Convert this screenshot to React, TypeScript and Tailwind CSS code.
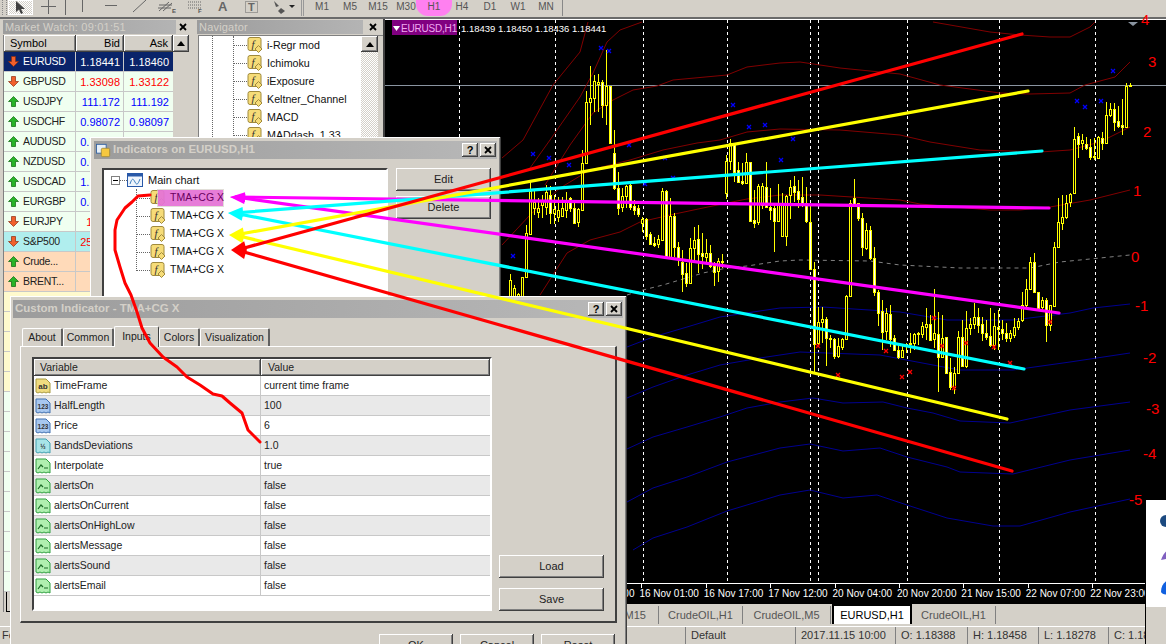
const raised = "shadow-[inset_-1px_-1px_#404040,inset_1px_1px_#fff,inset_-2px_-2px_#808080]";
const dither = "bg-[repeating-conic-gradient(#fff_0_25%,#d4d0c8_0_50%)] bg-[length:2px_2px]";

type Row = [string, string, string, "up" | "down", string, string];

const quotes: Row[] = [
  ["EURUSD", "1.18441", "1.18460", "down", "text-white", "bg-[#0a246a] text-white"],
  ["GBPUSD", "1.33098", "1.33122", "down", "text-[#ff0000]", "bg-[#f0fff0]"],
  ["USDJPY", "111.172", "111.192", "up", "text-[#0000ff]", "bg-[#f0fff0]"],
  ["USDCHF", "0.98072", "0.98097", "up", "text-[#0000ff]", "bg-[#f0fff0]"],
  ["AUDUSD", "0.76512", "", "up", "text-[#0000ff]", "bg-[#f0fff0]"],
  ["NZDUSD", "0.68470", "", "up", "text-[#0000ff]", "bg-[#f0fff0]"],
  ["USDCAD", "1.27310", "", "up", "text-[#0000ff]", "bg-[#f0fff0]"],
  ["EURGBP", "0.88982", "", "up", "text-[#0000ff]", "bg-[#f0fff0]"],
  ["EURJPY", "131.54", "", "down", "text-[#ff0000]", "bg-[#f0fff0]"],
  ["S&P500", "2568.40", "", "down", "text-[#ff0000]", "bg-[#b0eeee]"],
  ["Crude...", "", "", "up", "", "bg-[#ffdab9]"],
  ["BRENT...", "", "", "up", "", "bg-[#ffdab9]"],
];

const params: [string, string, "ab" | "123" | "half" | "bool"][] = [
  ["TimeFrame", "current time frame", "ab"],
  ["HalfLength", "100", "123"],
  ["Price", "6", "123"],
  ["BandsDeviations", "1.0", "half"],
  ["Interpolate", "true", "bool"],
  ["alertsOn", "false", "bool"],
  ["alertsOnCurrent", "false", "bool"],
  ["alertsOnHighLow", "false", "bool"],
  ["alertsMessage", "false", "bool"],
  ["alertsSound", "false", "bool"],
  ["alertsEmail", "false", "bool"],
];

// x, high, low, body top, body bottom, filled
const candles: [number, number, number, number, number, number][] = [
  [510, 274, 296, 280, 296, 0], [514, 285, 296, 288, 296, 0], [518, 293, 296, 294, 296, 0], [522, 277, 296, 277, 296, 0],
  [526, 225, 278, 233, 277, 0], [530, 182, 234, 191, 234, 0], [534, 190, 215, 202, 208, 0], [538, 198, 218, 208, 212, 0],
  [542, 195, 218, 200, 205, 0], [546, 185, 215, 192, 207, 0], [550, 186, 224, 195, 213, 1], [554, 195, 224, 209, 213, 0],
  [558, 197, 222, 210, 217, 0], [562, 197, 216, 208, 216, 0], [566, 192, 218, 200, 210, 0], [570, 197, 212, 198, 208, 1],
  [574, 200, 223, 208, 223, 1], [578, 208, 227, 209, 222, 0], [582, 150, 210, 163, 210, 0], [586, 91, 163, 102, 163, 0],
  [590, 66, 125, 98, 102, 0], [594, 75, 112, 81, 98, 0], [598, 74, 112, 82, 84, 0], [602, 80, 118, 82, 105, 1],
  [606, 50, 125, 86, 105, 0], [610, 86, 143, 86, 143, 1], [614, 130, 190, 153, 188, 1], [618, 172, 215, 188, 208, 1],
  [622, 188, 212, 196, 207, 0], [626, 185, 208, 186, 196, 0], [630, 184, 210, 185, 207, 1], [634, 200, 215, 206, 210, 1],
  [638, 205, 217, 208, 214, 1], [642, 217, 232, 219, 223, 0], [646, 218, 240, 219, 236, 1], [650, 232, 245, 234, 244, 1],
  [654, 237, 247, 243, 245, 1], [658, 235, 248, 239, 244, 0], [662, 188, 240, 191, 240, 0], [666, 190, 257, 191, 257, 1],
  [670, 198, 257, 216, 257, 0], [674, 213, 257, 216, 247, 1], [678, 242, 266, 247, 258, 1], [682, 250, 292, 262, 274, 1],
  [686, 263, 287, 273, 283, 1], [690, 238, 283, 248, 283, 0], [694, 227, 263, 240, 248, 0], [698, 225, 273, 239, 254, 1],
  [702, 233, 269, 253, 256, 1], [706, 239, 263, 253, 257, 0], [710, 245, 268, 253, 266, 1], [714, 262, 286, 266, 272, 1],
  [718, 258, 282, 261, 271, 0], [722, 254, 268, 261, 262, 1], [726, 155, 199, 161, 193, 0], [730, 139, 170, 143, 161, 0],
  [734, 143, 182, 144, 172, 1], [738, 162, 182, 170, 182, 1], [742, 163, 185, 181, 183, 1], [746, 153, 184, 162, 183, 0],
  [750, 162, 221, 162, 221, 1], [754, 190, 228, 220, 223, 1], [758, 184, 225, 186, 222, 0], [762, 183, 209, 186, 205, 0],
  [766, 162, 207, 187, 207, 1], [770, 188, 220, 207, 210, 1], [774, 205, 252, 208, 221, 1], [778, 184, 221, 203, 221, 0],
  [782, 193, 236, 203, 236, 0], [786, 195, 246, 196, 236, 0], [790, 180, 219, 187, 195, 0], [794, 176, 202, 186, 192, 1],
  [798, 180, 208, 191, 199, 1], [802, 177, 207, 197, 203, 1], [806, 187, 223, 203, 221, 1], [810, 205, 269, 222, 269, 1],
  [814, 262, 372, 269, 344, 1], [818, 307, 345, 322, 343, 0], [822, 307, 343, 319, 322, 0], [826, 317, 366, 319, 338, 1],
  [830, 335, 348, 338, 339, 1], [834, 338, 359, 339, 356, 1], [838, 338, 358, 346, 356, 0], [842, 338, 350, 339, 347, 0],
  [846, 295, 340, 296, 339, 0], [850, 200, 296, 203, 296, 0], [854, 179, 206, 198, 206, 1], [858, 203, 221, 203, 218, 1],
  [862, 213, 256, 218, 247, 1], [866, 223, 250, 230, 248, 0], [870, 226, 260, 230, 258, 1], [874, 247, 296, 258, 292, 1],
  [878, 290, 326, 292, 313, 1], [882, 300, 350, 311, 332, 1], [886, 308, 340, 313, 331, 0], [890, 305, 347, 314, 339, 1],
  [894, 335, 350, 338, 350, 1], [898, 345, 359, 350, 357, 1], [902, 345, 358, 350, 357, 0], [906, 343, 353, 345, 346, 1],
  [910, 333, 353, 343, 344, 1], [914, 333, 350, 334, 343, 0], [918, 332, 345, 333, 334, 1], [922, 322, 338, 326, 334, 0],
  [926, 308, 340, 324, 327, 0], [930, 315, 340, 324, 340, 1], [934, 289, 348, 333, 339, 0], [938, 312, 392, 334, 357, 1],
  [942, 315, 357, 338, 357, 0], [946, 337, 374, 337, 373, 1], [950, 358, 390, 372, 387, 1], [954, 367, 394, 373, 387, 0],
  [958, 331, 374, 337, 373, 0], [962, 320, 366, 337, 366, 1], [966, 311, 368, 328, 366, 0], [970, 318, 335, 324, 328, 0],
  [974, 303, 329, 317, 324, 0], [978, 308, 333, 317, 325, 1], [982, 317, 341, 324, 333, 1], [986, 320, 340, 333, 337, 1],
  [990, 308, 347, 336, 345, 1], [994, 313, 350, 326, 345, 0], [998, 310, 350, 327, 329, 1], [1002, 320, 340, 329, 333, 1],
  [1006, 323, 342, 333, 338, 1], [1010, 330, 342, 333, 338, 0], [1014, 318, 338, 327, 335, 0], [1018, 318, 330, 321, 327, 0],
  [1022, 292, 322, 305, 320, 0], [1026, 279, 307, 289, 305, 0], [1030, 257, 290, 262, 289, 0], [1034, 253, 292, 262, 292, 1],
  [1038, 293, 308, 292, 308, 1], [1042, 297, 309, 300, 307, 0], [1046, 298, 342, 300, 325, 1], [1050, 305, 331, 305, 325, 0],
  [1054, 242, 307, 247, 306, 0], [1058, 198, 247, 222, 247, 0], [1062, 195, 230, 217, 223, 0], [1066, 195, 219, 203, 217, 0],
  [1070, 193, 207, 194, 202, 0], [1074, 127, 193, 139, 193, 0], [1078, 133, 158, 136, 144, 1], [1082, 134, 150, 140, 143, 0],
  [1086, 137, 150, 144, 148, 1], [1090, 139, 160, 147, 157, 1], [1094, 138, 160, 156, 157, 1], [1098, 136, 159, 137, 158, 0],
  [1102, 132, 150, 138, 143, 1], [1106, 102, 143, 115, 143, 0], [1110, 103, 117, 109, 115, 0], [1114, 103, 131, 109, 122, 1],
  [1118, 106, 128, 121, 126, 1], [1122, 99, 135, 125, 127, 1], [1126, 83, 127, 86, 127, 0], [1130, 83, 86, 85, 86, 1],
];

const redBands = [
  "502,158 523,140 553,85 580,52 588,22",
  "530,168 550,140 580,97 593,73 607,42 620,30 642,22",
  "545,185 570,145 593,113 613,100 633,90 657,86 673,80 727,75 747,67 780,63 800,62 840,68 900,74 940,85 1000,93 1030,94 1070,93 1085,85 1115,77 1130,62",
  "933,22 990,32 1020,35 1050,37 1070,37 1090,27 1095,22",
  "502,245 530,215 560,188 590,170 630,160 663,150 697,143 720,140 747,132 780,129 840,130 900,135 930,142 980,150 1040,152 1070,150 1100,142 1130,127",
  "540,295 567,253 590,240 620,232 640,222 670,215 703,208 727,203 747,199 780,195 820,195 900,200 920,204 990,210 1020,210 1050,207 1090,200 1130,190",
];
const blueBands = [
  "627,347 653,337 687,327 720,317 753,312 780,308 823,307 900,312 947,320 1013,320 1070,313 1093,308 1130,304",
  "627,398 653,387 687,375 720,365 760,358 800,352 880,355 933,365 960,370 1013,370 1070,362 1130,353",
  "627,449 653,437 687,427 720,417 747,408 780,402 813,398 843,403 883,402 907,408 933,413 960,421 1010,423 1070,410 1130,402",
  "627,502 653,488 687,477 727,462 780,448 810,444 843,451 880,448 907,457 947,467 960,472 1013,474 1070,460 1130,450",
  "633,550 653,538 687,527 727,511 780,495 810,490 843,498 877,495 907,505 947,518 993,526 1020,526 1070,512 1130,499",
];
const zeroLine = "627,295 643,290 663,285 703,273 727,268 747,266 780,261 800,260 870,261 900,265 960,268 1030,268 1060,262 1090,259 1130,255";

const blueMarks = [[601, 48], [609, 51], [733, 105], [749, 127], [765, 125], [533, 154], [549, 158], [569, 165], [513, 256], [629, 145], [793, 139], [781, 160], [665, 158], [645, 184], [673, 178], [1077, 101], [1085, 107], [1101, 101], [1113, 71]];
const redMarks = [[818, 346], [838, 375], [886, 351], [902, 377], [910, 372], [934, 318], [942, 346], [954, 388], [966, 343], [994, 347], [1010, 363], [1050, 322]];
const gridLines = [459, 555, 643, 727, 810, 818, 907, 999, 1095];
const levels: [string, number, number][] = [["4", 1141, 25], ["3", 1148, 67], ["2", 1143, 137], ["1", 1133, 196], ["0", 1131, 262], ["-1", 1135, 311], ["-2", 1143, 363], ["-3", 1146, 414], ["-4", 1143, 459], ["-5", 1129, 505]];

const axisLabels = ["15 Nov 09:00", "16 Nov 01:00", "16 Nov 17:00", "17 Nov 12:00", "20 Nov 04:00", "20 Nov 20:00", "21 Nov 15:00", "22 Nov 07:00", "22 Nov 23:00"];

// x1,y1 is always the arrow tip
const arrows: [string, number, number, number, number][] = [
  ["#ff00ff", 230, 197, 1049, 208],
  ["#ff00ff", 230, 197, 1059, 313],
  ["#00ffff", 228, 213, 1042, 151],
  ["#00ffff", 228, 213, 1024, 369],
  ["#ffff00", 229, 235, 1028, 91],
  ["#ffff00", 229, 235, 1007, 419],
  ["#ff0000", 231, 250, 1022, 34],
  ["#ff0000", 231, 250, 1012, 471],
];

const handCurve = "150,195 138,196 132,202 125,208 117,220 115,230 115,250 120,267 125,283 131,295 137,312 142,328 150,343 163,357 177,367 187,377 200,385 213,394 222,396 230,403 242,413 248,430 260,442";

function Head({ c, x1, y1, x2, y2 }: { c: string; x1: number; y1: number; x2: number; y2: number }) {
  const len = Math.hypot(x2 - x1, y2 - y1);
  const ux = (x2 - x1) / len;
  const uy = (y2 - y1) / len;
  const bx = x1 + ux * 15;
  const by = y1 + uy * 15;
  const pts = `${x1},${y1} ${bx - uy * 5},${by + ux * 5} ${bx + uy * 5},${by - ux * 5}`;
  return <polygon points={pts} fill={c} />;
}

function FuncIcon() {
  return (
    <svg width="16" height="16" viewBox="0 0 16 16" className="shrink-0">
      <rect x="1" y="0.5" width="13" height="13" rx="2" fill="#f6dc78" stroke="#a08a3c" />
      <text x="4.5" y="11" fontSize="11" fontStyle="italic" fontFamily="'Liberation Serif', serif" fill="#333">f</text>
      <polygon points="11.5,8.5 15,12 11.5,15.5 8,12" fill="#f6dc78" stroke="#a08a3c" />
    </svg>
  );
}

function ParamIcon({ kind }: { kind: "ab" | "123" | "half" | "bool" }) {
  const colors = {
    ab: ["#f0dc80", "#a89a40", "ab"],
    "123": ["#a8c8f0", "#4070b0", "123"],
    half: ["#a8e4e8", "#40a0b0", "½"],
    bool: ["#b0f0b0", "#30a040", ""],
  }[kind];
  return (
    <svg width="16" height="16" viewBox="0 0 16 16" className="shrink-0">
      <path d="M1 1h10l4 4v10l-2-1-2 1-2-1-2 1-2-1-2 1-2-1z" fill={colors[0]} stroke={colors[1]} />
      {kind === "bool" ? (
        <path d="M3 11l3-4 2 2M9 10h4" fill="none" stroke="#1c6a28" strokeWidth="1.2" />
      ) : (
        <text x="8" y="11" textAnchor="middle" fontSize={kind === "ab" ? 8 : 6.5} fontWeight="bold" fontFamily="'Liberation Sans', sans-serif" fill="#333">{colors[2]}</text>
      )}
    </svg>
  );
}

function Dir({ d }: { d: "up" | "down" }) {
  return d === "up" ? (
    <svg width="11" height="11" viewBox="0 0 11 11" className="shrink-0">
      <polygon points="5.5,0.5 10.5,5.5 7.5,5.5 7.5,10.5 3.5,10.5 3.5,5.5 0.5,5.5" fill="#28b428" stroke="#0c640c" strokeWidth="0.7" />
    </svg>
  ) : (
    <svg width="11" height="11" viewBox="0 0 11 11" className="shrink-0">
      <polygon points="5.5,10.5 10.5,5.5 7.5,5.5 7.5,0.5 3.5,0.5 3.5,5.5 0.5,5.5" fill="#f0602c" stroke="#8c2c10" strokeWidth="0.7" />
    </svg>
  );
}

function CloseGlyph() {
  return (
    <svg width="8" height="8" viewBox="0 0 8 8">
      <path d="M1 1l6 6M7 1L1 7" stroke="#000" strokeWidth="1.8" />
    </svg>
  );
}

function WinTitle({ title, icon }: { title: string; icon?: boolean }) {
  return (
    <div className="h-[18px] flex items-center bg-linear-to-r from-[#9c9c9c] to-[#b8b8b8] pl-[2px] pr-px gap-[2px] shrink-0">
      {icon && (
        <svg width="15" height="15" viewBox="0 0 17 15" className="shrink-0">
          <rect x="0.5" y="0.5" width="11" height="10" fill="#e8f0f8" stroke="#3060a0" />
          <rect x="6" y="5" width="9.5" height="9.5" rx="1.5" fill="#f6c840" stroke="#a08a3c" />
        </svg>
      )}
      <span className="text-[11.5px] font-bold text-[#d4d0c8] flex-1 whitespace-nowrap">{title}</span>
      <button className={`w-[16px] h-[14px] bg-[#d4d0c8] text-[11px] font-bold leading-none text-black ${raised}`}>?</button>
      <button className={`w-[16px] h-[14px] bg-[#d4d0c8] flex items-center justify-center ${raised}`}>
        <CloseGlyph />
      </button>
    </div>
  );
}

function Toolbar() {
  const tfs = ["M1", "M5", "M15", "M30", "H1", "H4", "D1", "W1", "MN"];
  return (
    <div className="h-[19px] shrink-0 flex items-start bg-[#d4d0c8] border-b-2 border-[#6a6a6a] text-[#555]">
      <div className="w-[5px] h-[15px] ml-[2px] border-x border-dotted border-[#888]" />
      <div className={`ml-[1px] w-[25px] h-[15px] flex justify-center border border-white ${dither}`}>
        <svg width="11" height="14" viewBox="0 0 11 14"><polygon points="1,0 1,11 4,8.5 6,13 8,12 6,8 10,8" fill="#404040" /></svg>
      </div>
      <svg width="268" height="16" viewBox="33 0 268 16" className="shrink-0" fill="none" stroke="#666">
        <path d="M41 6.5h15M48.5 0v14M65.5 0v15M82.5 0v12M105 5.5h12M133 12L146 0" />
        <path d="M159 11l10-9M163 11l9-8M159 5h13M158 8h13" />
        <path d="M188 2h14M188 5h14M188 8h14" strokeDasharray="1 1" />
        <path d="M245.500 1.500h12v11h-12z" strokeDasharray="1 1" />
        <polygon points="274,1 279,6 276,7" fill="#555" stroke="none" />
        <polygon points="281,8 285,11 281,14 278,11" fill="#555" stroke="none" />
        <polygon points="289,5 295,5 292,8" fill="#222" stroke="none" />
        <text x="172" y="13" fontSize="6" fontWeight="bold" fill="#555" stroke="none" fontFamily="'Liberation Sans', sans-serif">E</text>
        <text x="198" y="13" fontSize="6" fontWeight="bold" fill="#555" stroke="none" fontFamily="'Liberation Sans', sans-serif">F</text>
        <text x="218" y="11" fontSize="13" fontWeight="bold" fill="#666" stroke="none" fontFamily="'Liberation Sans', sans-serif">A</text>
        <text x="248" y="11" fontSize="11" fontWeight="bold" fill="#666" stroke="none" fontFamily="'Liberation Sans', sans-serif">T</text>
      </svg>
      <div className="w-[3px] h-[16px] border-x border-[#999] mr-[4px]" />
      {tfs.map((t) => (
        <div key={t} className="relative w-[28px] h-[15px] flex justify-center text-[10px] leading-[13px]">
          {t === "H1" && <div className="absolute left-[-4px] top-0 w-[36px] h-[16px] rounded-b-[12px] bg-[#ff80f0]" />}
          <span className="relative">{t}</span>
        </div>
      ))}
      <div className="w-px h-[16px] bg-[#888] ml-[2px]" />
    </div>
  );
}

function MarketWatch() {
  return (
    <div className="w-[186px] shrink-0 flex flex-col">
      <div className="h-[14px] mt-px flex items-center mb-px">
        <div className="w-[173px] h-[14px] bg-linear-to-r from-[#9c9c9c] to-[#b4b4b4] text-[#d4d0c8] text-[11px] leading-[14px] px-[2px] tracking-[0.2px]">Market Watch: 09:01:51</div>
        <div className="flex-1 flex justify-center"><CloseGlyph /></div>
      </div>
      <div className="flex border-l border-[#808080]">
        <div className="w-[169px] text-[11px]">
          <div className="h-[17px] flex text-black">
            <div className={`w-[72px] pl-[6px] leading-[17px] ${raised}`}>Symbol</div>
            <div className={`w-[48px] pr-[4px] text-right leading-[17px] ${raised}`}>Bid</div>
            <div className={`w-[49px] pr-[5px] text-right leading-[17px] ${raised}`}>Ask</div>
          </div>
          {quotes.map((q) => (
            <div key={q[0]} className={`h-[20px] flex border-b border-[#c8c8c8] leading-[21px] ${q[5]}`}>
              <div className="w-[72px] flex items-center gap-[4px] pl-[4px] border-r border-[#c8c8c8] whitespace-nowrap text-[10.5px] tracking-[-0.3px]">
                <Dir d={q[3]} />
                {q[0]}
              </div>
              <div className={`w-[48px] text-right pr-[3px] border-r border-[#c8c8c8] ${q[4]}`}>{q[1]}</div>
              <div className={`w-[49px] text-right pr-[4px] ${q[4]}`}>{q[2]}</div>
            </div>
          ))}
          {Array.from({ length: 5 }).map((_, i) => (
            <div key={i} className="h-[20px] bg-[#fffacd] border-b border-[#c8c8c8]" />
          ))}
          {Array.from({ length: 10 }).map((_, i) => (
            <div key={i} className="h-[20px] bg-[#f0fff0] border-b border-[#c8c8c8]" />
          ))}
          <div className="h-[20px] pl-[2px]"><div className="w-[30px] h-full border-l border-b border-black" /></div>
        </div>
        <div className="w-[16px] flex flex-col">
          <div className={`h-[17px] flex items-center justify-center ${raised}`}>
            <svg width="8" height="5" viewBox="0 0 8 5"><polygon points="4,0 8,5 0,5" fill="#000" /></svg>
          </div>
        </div>
      </div>
    </div>
  );
}

function Navigator() {
  const items = ["i-Regr mod", "Ichimoku", "iExposure", "Keltner_Channel", "MACD", "MADdash_1.33"];
  return (
    <div className="w-[186px] ml-[8px] shrink-0 flex flex-col">
      <div className="h-[14px] mt-px mb-px flex items-center">
        <div className="w-[166px] h-[14px] bg-linear-to-r from-[#9c9c9c] to-[#b4b4b4] text-[#d4d0c8] text-[11px] leading-[14px] px-[2px] tracking-[0.2px]">Navigator</div>
        <div className="flex-1 flex justify-center"><CloseGlyph /></div>
      </div>
      <div className="flex h-[120px] ml-px border-t border-l border-[#808080]">
        <div className="w-[162px] bg-white text-[10.7px] text-[#111] relative">
          <div className="absolute left-[13px] top-0 h-full border-l border-dotted border-[#666]" />
          <div className="ml-[34px] border-l border-dotted border-[#666]">
            {items.map((n) => (
              <div key={n} className="h-[18px] flex items-center">
                <span className="w-[13px] border-t border-dotted border-[#666]" />
                <FuncIcon />
                <span className="ml-[4px] whitespace-nowrap">{n}</span>
              </div>
            ))}
          </div>
        </div>
        <div className={`w-[17px] flex flex-col ${dither}`}>
          <div className={`h-[16px] bg-[#d4d0c8] flex items-center justify-center ${raised}`}>
            <svg width="8" height="5" viewBox="0 0 8 5"><polygon points="4,0 8,5 0,5" fill="#000" /></svg>
          </div>
        </div>
      </div>
    </div>
  );
}

function Chart() {
  return (
    <div className="flex-1 relative bg-black border-t border-white min-h-0">
      <svg width="781" height="563" viewBox="385 20 781 563" className="block">
        <line x1="385" x2="1166" y1="85.5" y2="85.5" stroke="#8a94a0" />
        {gridLines.map((x) => (
          <line key={x} x1={x + 0.5} x2={x + 0.5} y1="20" y2="583" stroke="#fff" strokeDasharray="3 3" />
        ))}
        {redBands.map((p, i) => <polyline key={i} points={p} fill="none" stroke="#800000" />)}
        {blueBands.map((p, i) => <polyline key={i} points={p} fill="none" stroke="#000090" />)}
        <polyline points={zeroLine} fill="none" stroke="#808080" strokeDasharray="4 4" />
        <g shapeRendering="crispEdges">
          {candles.map(([x, h, l, t, b, f]) => (
            <g key={x}>
              <line x1={x + 0.5} x2={x + 0.5} y1={h} y2={l} stroke="#ffff00" />
              <rect x={x - 0.5} y={t + 0.5} width="2" height={Math.max(b - t, 1)} fill={f ? "#fff" : "#000"} stroke="#ffff00" />
            </g>
          ))}
        </g>
        {blueMarks.map(([x, y], i) => (
          <path key={i} d={`M${x - 2} ${y - 2}l4 4M${x + 2} ${y - 2}l-4 4`} stroke="#0000ff" strokeWidth="1.3" />
        ))}
        {redMarks.map(([x, y], i) => (
          <path key={i} d={`M${x - 2} ${y - 2}l4 4M${x + 2} ${y - 2}l-4 4`} stroke="#ff0000" strokeWidth="1.3" />
        ))}
        <polygon points="1128,22 1138,22 1133,26" fill="#8a94a0" />
      </svg>
      <div className="absolute left-[7px] top-0 flex items-start">
        <div className="w-[65px] h-[15px] bg-[#800080] flex items-center pt-[2px]">
          <svg width="7" height="5" viewBox="0 0 7 5" className="ml-px mr-px shrink-0"><polygon points="0,0 7,0 3.500,5" fill="#fff" /></svg>
          <span className="text-[#f0a8f0] text-[10px] leading-[13px] tracking-[-0.2px] whitespace-nowrap">EURUSD,H1</span>
        </div>
        <span className="ml-[4px] mt-[3px] text-white text-[9.5px] leading-[12px] whitespace-pre">1.18439 1.18450 1.18436 1.18441</span>
      </div>
    </div>
  );
}

function ChartColumn() {
  const tabs = [
    ["M15", "w-[33px] justify-end pr-[12px]"],
    ["CrudeOIL,H1", "w-[84px] justify-center"],
    ["CrudeOIL,M5", "w-[88px] justify-center"],
  ];
  return (
    <div className="flex-1 min-w-0 flex flex-col border-l-2 border-[#404040]">
      <Chart />
      <div className="h-[21px] shrink-0 bg-black border-t border-white pl-[190px] flex text-white text-[10px] overflow-hidden">
        {axisLabels.map((l) => (
          <div key={l} className="w-[64.4px] shrink-0">
            <div className="w-px h-[4px] bg-white ml-[2px]" />
            <div className="leading-[12px] whitespace-nowrap">{l}</div>
          </div>
        ))}
      </div>
      <div className="h-[22px] shrink-0 bg-[#d4d0c8] pt-[2px] pl-[241px] flex text-[11px] text-[#555]">
        {tabs.map(([t, c]) => (
          <div key={t} className={`h-[18px] flex items-center border-r border-[#808080] ${c}`}>{t}</div>
        ))}
        <div className="w-[80px] ml-[1px] h-[20px] -mt-[2px] bg-white border-x-2 border-t-2 border-black text-black flex items-center justify-center">EURUSD,H1</div>
        <div className="w-[84px] h-[18px] flex items-center justify-center border-r border-[#808080]">CrudeOIL,H1</div>
      </div>
    </div>
  );
}

function IndicatorsDialog() {
  return (
    <div className={`absolute left-[90px] top-[137px] w-[411px] h-[200px] bg-[#d4d0c8] p-[4px] flex flex-col ${raised}`}>
      <WinTitle title="Indicators on EURUSD,H1" icon />
      <div className="flex flex-1 mt-[9px] ml-[8px] min-h-0">
        <div className="w-[286px] bg-white border-2 border-t-[#404040] border-l-[#404040] border-r-white border-b-white pt-px text-[10.5px] text-[#111]">
          <div className="h-[18px] flex items-center pl-[7px]">
            <span className="w-[9px] h-[9px] border border-[#808080] flex items-center justify-center"><span className="w-[5px] h-px bg-black" /></span>
            <span className="w-[7px] border-t border-dotted border-[#666]" />
            <svg width="16" height="14" viewBox="0 0 16 14" className="shrink-0">
              <rect x="0.5" y="0.5" width="15" height="13" fill="#eef4fc" stroke="#2858a8" />
              <rect x="0.5" y="0.5" width="15" height="3" fill="#2858a8" />
              <path d="M3 11c2-6 3-6 5-2s3 2 5-3" fill="none" stroke="#4080c0" />
            </svg>
            <span className="ml-[5px] text-[11px]">Main chart</span>
          </div>
          <div className="ml-[32px] border-l border-dotted border-[#666] h-[82px]">
            {[0, 1, 2, 3, 4].map((i) => (
              <div key={i} className="h-[18px] flex items-center relative">
                <span className="w-[13px] border-t border-dotted border-[#666]" />
                <FuncIcon />
                {i === 0 ? (
                  <>
                    <span className="absolute left-[20px] top-0 w-[67px] h-[18px] bg-[#d4d0c8] opacity-70" />
                    <span className="absolute left-[21px] top-[1px] w-[65px] h-[16px] bg-[#e763d8] opacity-80" />
                    <span className="relative ml-[4px] text-[#6a0060]">TMA+CG X</span>
                  </>
                ) : (
                  <span className="ml-[4px]">TMA+CG X</span>
                )}
              </div>
            ))}
          </div>
        </div>
        <div className="ml-[8px] w-[95px] flex flex-col gap-[5px] text-[11px] text-[#222]">
          <div className={`h-[23px] flex items-center justify-center ${raised}`}>Edit</div>
          <div className={`h-[23px] flex items-center justify-center ${raised}`}>Delete</div>
        </div>
      </div>
    </div>
  );
}

function CustomDialog() {
  const tabs = [["About", "w-[41px]"], ["Common", "w-[51px]"], ["Inputs", "w-[45px]"], ["Colors", "w-[41px]"], ["Visualization", "w-[70px]"]];
  return (
    <div className={`absolute left-[10px] top-[296px] w-[617px] h-[370px] bg-[#d4d0c8] pt-[4px] pl-[3px] pr-[4px] flex flex-col ${raised}`}>
      <WinTitle title="Custom Indicator - TMA+CG X" />
      <div className="flex h-[28px] pl-[9px] items-end text-[10.5px] text-[#222] shrink-0">
        {tabs.map(([t, w]) =>
          t === "Inputs" ? (
            <div key={t} className={`${w} h-[21px] mb-[-1px] relative bg-[#d4d0c8] border-x border-t border-white border-r-[#404040] rounded-t-[2px] flex justify-center pt-[2px]`}>{t}</div>
          ) : (
            <div key={t} className={`${w} h-[18px] border-l border-t border-white border-r-2 border-r-[#606060] rounded-t-[2px] flex items-center justify-center`}>{t}</div>
          ),
        )}
      </div>
      <div className="ml-[7px] w-[597px] h-[277px] shrink-0 border-t border-l border-white border-r-2 border-b-2 border-r-[#404040] border-b-[#404040] pt-[10px] pl-[11px] flex">
        <div className="w-[460px] h-[254px] bg-white border-2 border-t-[#404040] border-l-[#404040] border-r-white border-b-white text-[10.5px] text-[#222]">
          <div className="h-[17px] flex">
            <div className={`w-[227px] pl-[6px] leading-[17px] bg-[#d4d0c8] ${raised}`}>Variable</div>
            <div className={`flex-1 pl-[7px] leading-[17px] bg-[#d4d0c8] ${raised}`}>Value</div>
          </div>
          {params.map(([n, v, k], i) => (
            <div key={n} className={`h-[20px] flex border-b border-[#c8c8c8] ${i % 2 ? "bg-[#e9e9e9]" : "bg-white"}`}>
              <div className="w-[227px] flex items-center gap-[3px] pl-[1px] border-r border-[#c8c8c8]">
                <ParamIcon kind={k} />
                {n}
              </div>
              <div className="flex-1 pl-[3px] leading-[19px]">{v}</div>
            </div>
          ))}
        </div>
        <div className="ml-[7px] w-[105px] h-[254px] flex flex-col justify-end gap-[10px] text-[11px] text-[#222]">
          <div className={`h-[23px] flex items-center justify-center ${raised}`}>Load</div>
          <div className={`h-[23px] flex items-center justify-center ${raised}`}>Save</div>
        </div>
      </div>
      <div className="flex justify-end gap-[7px] mt-[11px] pr-[8px] text-[11px] text-[#222]">
        {["OK", "Cancel", "Reset"].map((b) => (
          <div key={b} className={`w-[74px] h-[23px] flex items-center justify-center ${raised}`}>{b}</div>
        ))}
      </div>
    </div>
  );
}

export default function App() {
  const status = [
    ["w-[110px]", "Default"],
    ["w-[100px]", "2017.11.15 10:00"],
    ["w-[72px]", "O: 1.18388"],
    ["w-[71px]", "H: 1.18458"],
    ["w-[70px]", "L: 1.18278"],
    ["w-[37px]", "C: 1.18441"],
  ];
  return (
    <div className="relative w-[1166px] h-[644px] overflow-hidden bg-[#d4d0c8] flex flex-col text-[#222] [font-family:'Liberation_Sans',Arial,sans-serif]">
      <Toolbar />
      <div className="flex-1 min-h-0 flex">
        <div className="w-[383px] shrink-0 pl-[3px] flex overflow-hidden">
          <MarketWatch />
          <Navigator />
        </div>
        <ChartColumn />
      </div>
      <div className="h-[18px] shrink-0 border-t border-white flex items-center text-[11px] text-[#333]">
        <div className="w-[686px] pl-[2px] border-r border-[#808080] h-full leading-[17px] whitespace-nowrap">For Help, press F1</div>
        {status.map(([w, t], i) => (
          <div key={t} className={`${w} pl-[5px] h-full leading-[17px] whitespace-nowrap overflow-hidden ${i < 5 ? "border-r border-[#808080]" : ""}`}>{t}</div>
        ))}
      </div>

      <IndicatorsDialog />
      <CustomDialog />

      <div className="absolute right-0 top-[500px] bottom-0 w-[21px] border-l border-black flex flex-col">
        <div className="h-[107px] bg-white overflow-hidden">
          <svg width="20" height="107" viewBox="0 0 20 107">
            <circle cx="20" cy="21" r="6" fill="#1c4a80" />
            <path d="M15 60c2-6 5-9 7-10l-2 9z" fill="#8060c0" />
            <path d="M15 92c0-6 3-10 7-12v14c-3 1-6 0-7-2z" fill="#1060e0" />
          </svg>
        </div>
        <div className="flex-1 bg-[#d4d0c8]" />
      </div>

      <svg width="1166" height="644" viewBox="0 0 1166 644" className="absolute left-0 top-0 pointer-events-none">
        {arrows.map(([c, x1, y1, x2, y2], i) => (
          <g key={i}>
            <line x1={x1 + 6} y1={y1} x2={x2} y2={y2} stroke={c} strokeWidth="3.2" strokeLinecap="round" />
            <Head c={c} x1={x1} y1={y1} x2={x2} y2={y2} />
          </g>
        ))}
        <polyline points={handCurve} fill="none" stroke="#ff0000" strokeWidth="3" strokeLinejoin="round" strokeLinecap="round" />
        {levels.map(([t, x, y]) => (
          <text key={t} x={x} y={y} fontSize="15" fill="#ff0000" fontFamily="'Liberation Sans', sans-serif">{t}</text>
        ))}
      </svg>
    </div>
  );
}
